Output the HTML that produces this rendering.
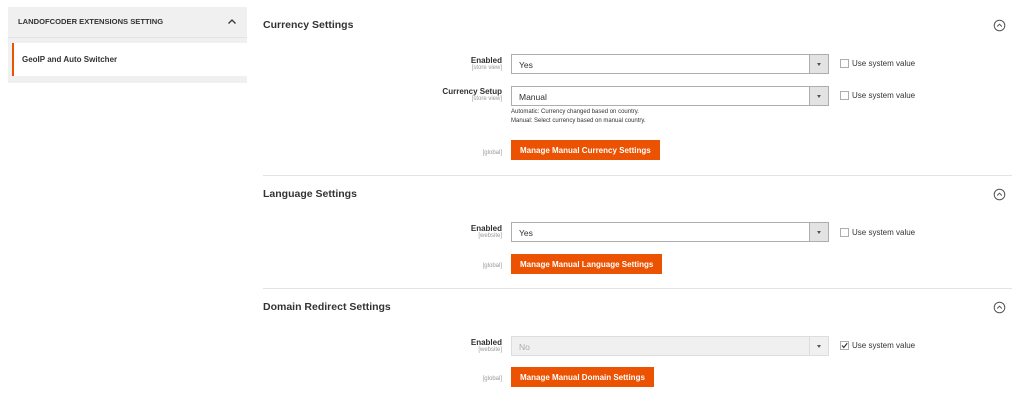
<!DOCTYPE html>
<html><head><style>
*{margin:0;padding:0;box-sizing:border-box}
body{width:1024px;height:401px;background:#fff;font-family:"Liberation Sans",sans-serif;color:#303030;position:relative;overflow:hidden}
.a{position:absolute}
.side{left:8px;top:7px;width:239px;height:76px;background:#f0f0f0}
.sh{left:18px;top:17px;font-size:7.6px;font-weight:bold;color:#333}
.item{left:12px;top:43px;width:235px;height:33px;background:#fff;border-left:2px solid #eb5202}
.item span{position:absolute;left:8px;top:12px;font-size:8px;font-weight:bold;color:#333}
.t{font-size:10.5px;font-weight:bold;color:#333;left:263px}
.lbl{right:522px;font-size:8px;font-weight:bold;text-align:right;color:#303030}
.sc{right:522px;font-size:6px;color:#999;text-align:right}
.sel{left:511px;width:318px;height:20px;border:1px solid #adadad;background:#fff;font-size:8.5px;padding:5px 0 0 7px}
.sel i{position:absolute;right:0;top:0;width:19px;height:18px;background:#e3e3e3;border-left:1px solid #adadad}
.sel i:after{content:"";position:absolute;left:7px;top:8px;border:2.5px solid transparent;border-top:3px solid #555}
.cb{left:840px;width:9px;height:9px;border:1px solid #adadad;background:#fff}
.ct{left:852px;font-size:8px;color:#333}
.btn{left:511px;height:20px;background:#eb5202;color:#fff;font-size:8px;font-weight:bold;padding:6px 9px 0}
.note{left:511px;font-size:6px;color:#333;line-height:9px}
.hr{left:263px;width:749px;height:1px;background:#e3e3e3}
</style></head><body>
<div class="a side"></div>
<div class="a sh">LANDOFCODER EXTENSIONS SETTING</div>
<svg class="a" style="left:227px;top:18px" width="10" height="7"><path d="M1.5 5.5 L5 2 L8.5 5.5" fill="none" stroke="#333" stroke-width="1.3"/></svg>
<div class="a" style="left:8px;top:37px;width:239px;height:1px;background:#e3e3e3"></div>
<div class="a item"><span>GeoIP and Auto Switcher</span></div>

<div class="a t" style="top:19px">Currency Settings</div>
<svg class="a" style="left:993px;top:19px" width="13" height="13"><circle cx="6.5" cy="6.5" r="5.3" fill="none" stroke="#555" stroke-width="1"/><path d="M4.2 7.5 L6.5 5.2 L8.8 7.5" fill="none" stroke="#555" stroke-width="1"/></svg>
<div class="a lbl" style="top:56px">Enabled</div><div class="a sc" style="top:65px">[store view]</div>
<div class="a sel" style="top:54px">Yes<i></i></div>
<div class="a cb" style="top:59px"></div><div class="a ct" style="top:59px">Use system value</div>
<div class="a lbl" style="top:87px">Currency Setup</div><div class="a sc" style="top:96px">[store view]</div>
<div class="a sel" style="top:86px">Manual<i></i></div>
<div class="a cb" style="top:91px"></div><div class="a ct" style="top:91px">Use system value</div>
<div class="a note" style="top:108px">Automatic: Currency changed based on country.<br>Manual: Select currency based on manual country.</div>
<div class="a sc" style="top:150px">[global]</div>
<div class="a btn" style="top:140px">Manage Manual Currency Settings</div>

<div class="a hr" style="top:175px"></div>
<div class="a t" style="top:188px">Language Settings</div>
<svg class="a" style="left:993px;top:188px" width="13" height="13"><circle cx="6.5" cy="6.5" r="5.3" fill="none" stroke="#555" stroke-width="1"/><path d="M4.2 7.5 L6.5 5.2 L8.8 7.5" fill="none" stroke="#555" stroke-width="1"/></svg>
<div class="a lbl" style="top:224px">Enabled</div><div class="a sc" style="top:233px">[website]</div>
<div class="a sel" style="top:222px">Yes<i></i></div>
<div class="a cb" style="top:228px"></div><div class="a ct" style="top:228px">Use system value</div>
<div class="a sc" style="top:263px">[global]</div>
<div class="a btn" style="top:254px">Manage Manual Language Settings</div>

<div class="a hr" style="top:288px"></div>
<div class="a t" style="top:301px">Domain Redirect Settings</div>
<svg class="a" style="left:993px;top:301px" width="13" height="13"><circle cx="6.5" cy="6.5" r="5.3" fill="none" stroke="#555" stroke-width="1"/><path d="M4.2 7.5 L6.5 5.2 L8.8 7.5" fill="none" stroke="#555" stroke-width="1"/></svg>
<div class="a lbl" style="top:338px">Enabled</div><div class="a sc" style="top:347px">[website]</div>
<div class="a sel" style="top:336px;background:#f0f0f0;border-color:#ddd;color:#aaa">No<i style="background:#f0f0f0;border-left-color:#ddd"></i></div>
<div class="a cb" style="top:341px"></div>
<svg class="a" style="left:840px;top:341px" width="9" height="9"><path d="M2 4.5 L3.8 6.5 L7.2 2.2" fill="none" stroke="#333" stroke-width="1.2"/></svg>
<div class="a ct" style="top:341px">Use system value</div>
<div class="a sc" style="top:376px">[global]</div>
<div class="a btn" style="top:367px">Manage Manual Domain Settings</div>
</body></html>
